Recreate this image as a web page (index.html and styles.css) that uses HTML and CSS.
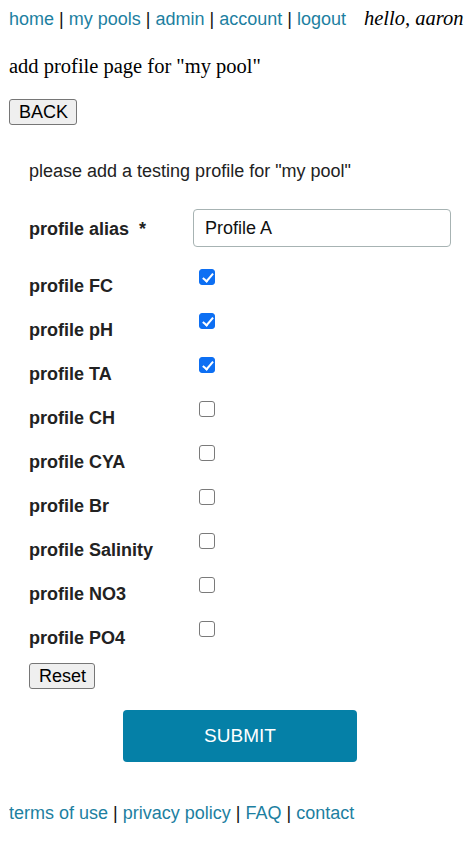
FILE: index.html
```html
<!DOCTYPE html>
<html>
<head>
<meta charset="utf-8">
<link rel="stylesheet" href="styles.css">
</head>
<body>
<nav class="topnav">
  <a href="#">home</a> | <a href="#">my pools</a> | <a href="#">admin</a> | <a href="#">account</a> | <a href="#">logout</a><span class="hello">hello, aaron</span>
</nav>
<h1 class="title">add profile page for "my pool"</h1>
<button class="btn back">BACK</button>
<form class="form">
  <p class="intro">please add a testing profile for "my pool"</p>
  <div class="row alias-row">
    <label class="lbl">profile alias&nbsp; *</label>
    <input class="text" type="text" value="Profile A">
  </div>
  <div class="row"><label class="lbl">profile FC</label><input class="cb" type="checkbox" checked></div>
  <div class="row"><label class="lbl">profile pH</label><input class="cb" type="checkbox" checked></div>
  <div class="row"><label class="lbl">profile TA</label><input class="cb" type="checkbox" checked></div>
  <div class="row"><label class="lbl">profile CH</label><input class="cb" type="checkbox"></div>
  <div class="row"><label class="lbl">profile CYA</label><input class="cb" type="checkbox"></div>
  <div class="row"><label class="lbl">profile Br</label><input class="cb" type="checkbox"></div>
  <div class="row"><label class="lbl">profile Salinity</label><input class="cb" type="checkbox"></div>
  <div class="row"><label class="lbl">profile NO3</label><input class="cb" type="checkbox"></div>
  <div class="row"><label class="lbl">profile PO4</label><input class="cb" type="checkbox"></div>
  <button type="reset" class="btn reset">Reset</button>
  <div class="submit-wrap"><button type="button" class="submit">SUBMIT</button></div>
</form>
<footer class="footer">
  <a href="#">terms of use</a> | <a href="#">privacy policy</a> | <a href="#">FAQ</a> | <a href="#">contact</a>
</footer>
</body>
</html>
```
FILE: styles.css
```css
body {
  margin: 8px 9px;
  font-family: "Liberation Sans", Arial, sans-serif;
  color: #222;
  background: #fff;
}
a { color: #1d7fa1; text-decoration: none; }
.topnav {
  font-size: 18px;
  line-height: 20px;
  color: #111;
}
.hello {
  font-family: "Liberation Serif", "Times New Roman", serif;
  font-style: italic;
  font-size: 20.5px;
  color: #000;
  margin-left: 18px;
}
.title {
  font-family: "Liberation Serif", "Times New Roman", serif;
  font-weight: normal;
  font-size: 20.5px;
  line-height: 24px;
  color: #000;
  margin: 25px 0 0 0;
}
.btn {
  font-family: "Liberation Sans", Arial, sans-serif;
  font-size: 18px;
  line-height: 20px;
  color: #000;
  background: #efefef;
  border: 1px solid #767676;
  border-radius: 3px;
  padding: 2px 8px 2px 9px;
}
.back { margin-top: 21px; display: block; }
.form {
  width: 422px;
  padding-left: 20px;
  margin: 0;
}
.intro {
  font-size: 18px;
  line-height: 20px;
  margin: 36px 0 0 0;
  color: #222;
}
.row {
  display: grid;
  grid-template-columns: 164px 1fr;
  align-items: start;
  height: 44px;
}
.alias-row {
  height: 54px;
  margin-top: 28px;
}
.lbl {
  font-weight: bold;
  font-size: 18px;
  line-height: 20px;
  color: #222;
  padding-top: 13px;
}
.alias-row .lbl { padding-top: 10px; }
.text {
  box-sizing: border-box;
  width: 258px;
  height: 38px;
  border: 1px solid #a7b3b3;
  border-radius: 4px;
  padding: 0 11px;
  font-family: "Liberation Sans", Arial, sans-serif;
  font-size: 18px;
  color: #111;
  outline: none;
}
.cb {
  -webkit-appearance: none;
  appearance: none;
  box-sizing: border-box;
  width: 16px;
  height: 16px;
  margin: 6px 0 0 6px;
  border: 1px solid #7a7a7a;
  border-radius: 3px;
  background: #fff;
  position: relative;
}
.cb:checked {
  background: #0d6ff3;
  border-color: #0d6ff3;
}
.cb:checked::after {
  content: "";
  position: absolute;
  left: 4.5px;
  top: 1px;
  width: 4px;
  height: 9px;
  border: solid #fff;
  border-width: 0 2.5px 2.5px 0;
  transform: rotate(40deg);
}
.reset {
  display: block;
  margin-top: 4px;
}
.submit-wrap {
  display: flex;
  justify-content: center;
  margin-top: 21px;
}
.submit {
  width: 234px;
  height: 52px;
  background: #0580a7;
  color: #fff;
  border: none;
  border-radius: 4px;
  font-family: "Liberation Sans", Arial, sans-serif;
  font-size: 19px;
}
.footer {
  font-size: 18px;
  line-height: 20px;
  color: #111;
  margin-top: 41px;
}
```
